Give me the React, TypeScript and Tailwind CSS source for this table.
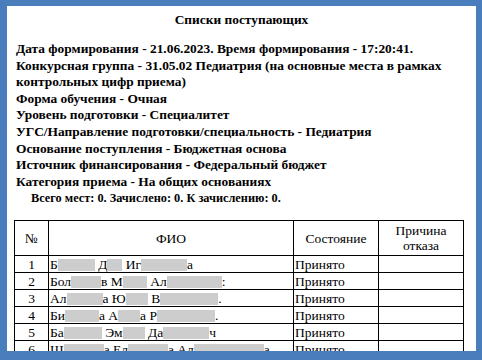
import React from 'react';

type Part = string | number;

// string = visible text, number = width of a blurred block
const rows: { n: number; name: Part[] }[] = [
  { n: 1, name: ['Б', 37, ' Д', 15, ' Иг', 46, 'а'] },
  { n: 2, name: ['Бол', 30, 'в М', 24, ' Ал', 55, ':'] },
  { n: 3, name: ['Ал', 36, 'а Ю', 22, ' В', 58, '.'] },
  { n: 4, name: ['Би', 34, 'а А', 22, 'а Р', 58, '.'] },
  { n: 5, name: ['Ба', 38, ' Эм', 22, ' Да', 46, 'ч'] },
  { n: 6, name: ['Ш', 40, 'а Ел', 40, 'а Ал', 70, 'а'] },
];

const Blur = ({ w }: { w: number }) => (
  <span
    className="inline-block h-[12px] align-[-2px] bg-[#cdcdcd] blur-[0.7px]"
    style={{ width: w }}
  />
);

const App = () => {
  return (
    <div className="w-[482px] h-[360px] bg-[#4a7dbc] pl-[7px] pt-[6px] pr-[6px] pb-[9px]">
      <div className="h-full bg-white overflow-hidden px-[9px] text-black font-['Liberation_Serif']">
        <h1 className="text-center font-bold text-[13.4px] leading-[17px] pt-[5px]">
          Списки поступающих
        </h1>

        <div className="mt-[13px] font-bold text-[13.4px] leading-[16.6px]">
          <p>Дата формирования - 21.06.2023. Время формирования - 17:20:41.</p>
          <p>
            Конкурсная группа - 31.05.02 Педиатрия (на основные места в рамках
            <br />
            контрольных цифр приема)
          </p>
          <p>Форма обучения - Очная</p>
          <p>Уровень подготовки - Специалитет</p>
          <p>УГС/Направление подготовки/специальность - Педиатрия</p>
          <p>Основание поступления - Бюджетная основа</p>
          <p>Источник финансирования - Федеральный бюджет</p>
          <p>Категория приема - На общих основаниях</p>
          <p className="pl-[15px] text-[12.3px] leading-[16px]">
            Всего мест: 0. Зачислено: 0. К зачислению: 0.
          </p>
        </div>

        <table className="mt-[14px] -ml-[2px] w-[450px] border-collapse text-[13.5px] leading-[15px]">
          <thead>
            <tr className="h-[35px]">
              <th className="w-[34px] border border-black font-normal p-0">№</th>
              <th className="w-[245px] border border-black font-normal p-0">ФИО</th>
              <th className="w-[85px] border border-black font-normal p-0">Состояние</th>
              <th className="border border-black font-normal leading-[15px] p-0">
                Причина
                <br />
                отказа
              </th>
            </tr>
          </thead>
          <tbody>
            {rows.map((r) => (
              <tr key={r.n} className="h-[17px]">
                <td className="border border-black text-center p-0">{r.n}</td>
                <td className="border border-black px-[1px] py-0 whitespace-nowrap">
                  {r.name.map((p, i) =>
                    typeof p === 'number' ? <Blur key={i} w={p} /> : <span key={i}>{p}</span>
                  )}
                </td>
                <td className="border border-black px-[1px] py-0">Принято</td>
                <td className="border border-black p-0"></td>
              </tr>
            ))}
          </tbody>
        </table>
      </div>
    </div>
  );
};

export default App;
